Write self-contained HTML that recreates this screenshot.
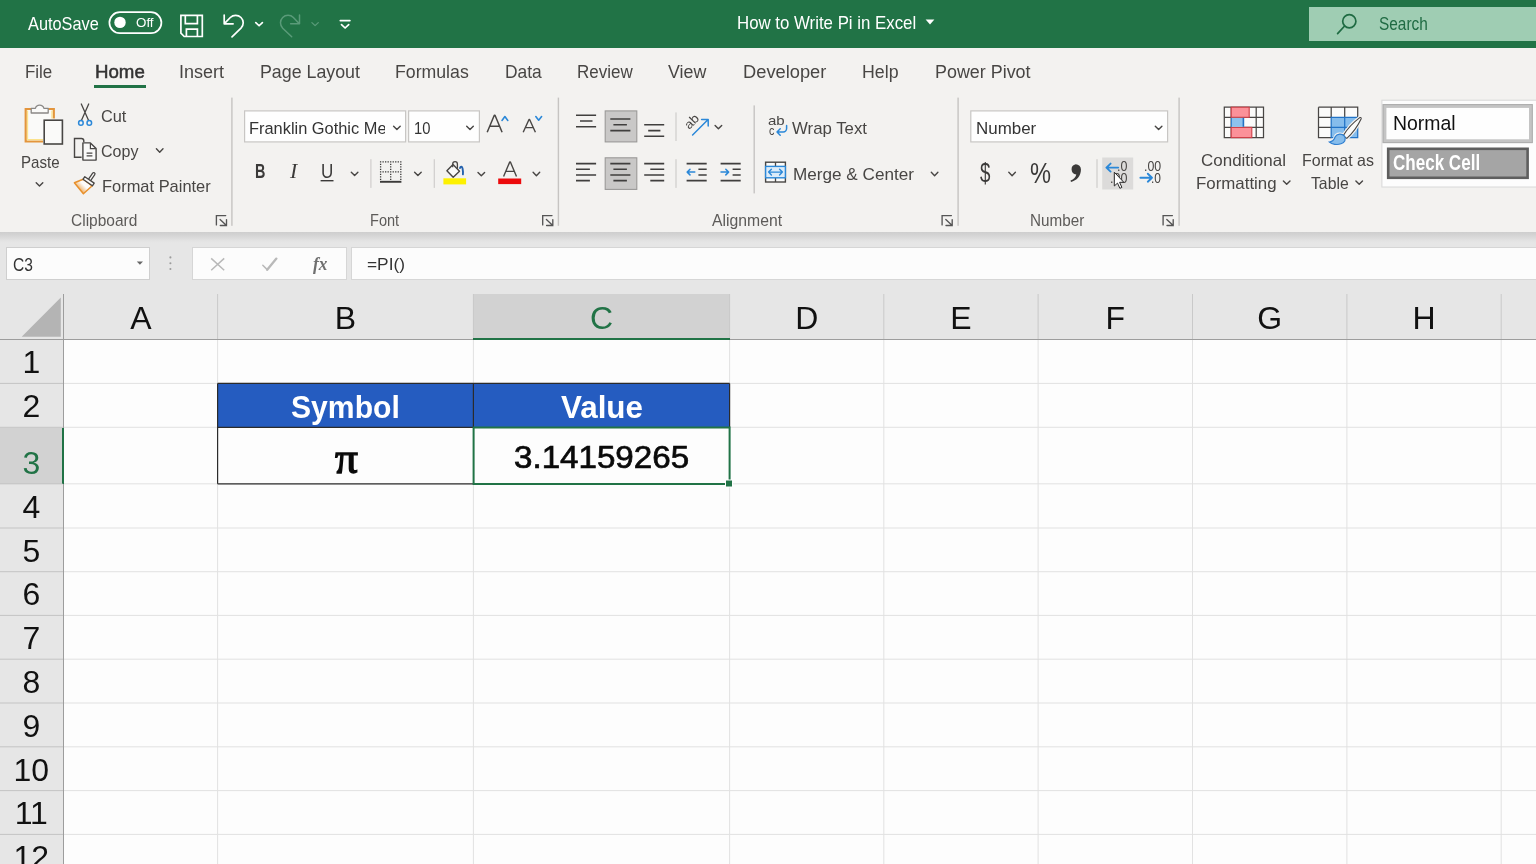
<!DOCTYPE html>
<html lang="en"><head><meta charset="utf-8"><title>How to Write Pi in Excel</title>
<style>
html,body{margin:0;padding:0}
body{width:1536px;height:864px;overflow:hidden;position:relative;background:#e6e6e6;font-family:"Liberation Sans",sans-serif;}
.t{position:absolute;white-space:pre;line-height:1;}
.r{position:absolute;box-sizing:border-box;}
svg.ov{position:absolute;left:0;top:0;}
#txt{position:absolute;left:0;top:0;width:1536px;height:864px;will-change:transform;}
</style></head><body>
<div class="r" style="left:0px;top:0px;width:1536px;height:48px;background:#217346;"></div>
<div class="r" style="left:0px;top:48px;width:1536px;height:184px;background:#f3f2f0;"></div>
<div class="r" style="left:0px;top:232px;width:1536px;height:11px;background:linear-gradient(#cecece 0%,#d2d2d2 20%,#dadada 50%,#e3e3e3 80%,#e6e6e6 100%);"></div>
<div class="r" style="left:1309px;top:7px;width:227px;height:34px;background:#9fcdb3;"></div>
<div class="r" style="left:6px;top:247px;width:144px;height:33px;background:#fcfcfc;border:1px solid #cfcfcf;"></div>
<div class="r" style="left:192px;top:247px;width:155px;height:33px;background:#fcfcfc;border:1px solid #d6d6d6;"></div>
<div class="r" style="left:351px;top:247px;width:1189px;height:33px;background:#fcfcfc;border:1px solid #d6d6d6;"></div>
<div class="r" style="left:64px;top:340px;width:1472px;height:524px;background:#fdfdfd;"></div>
<div class="r" style="left:473px;top:294px;width:257px;height:45px;background:#d2d2d2;"></div>
<div class="r" style="left:473px;top:338px;width:257px;height:2px;background:#217346;"></div>
<div class="r" style="left:0px;top:428px;width:63px;height:56px;background:#d2d2d2;"></div>
<div class="r" style="left:62px;top:428px;width:2px;height:56px;background:#217346;"></div>
<svg class="ov" width="1536" height="864" viewBox="0 0 1536 864">
<rect x="217.1" y="340" width="1" height="524" fill="#e2e2e2"/>
<rect x="217.1" y="294" width="1" height="45" fill="#c9c9c9"/>
<rect x="472.9" y="340" width="1" height="524" fill="#e2e2e2"/>
<rect x="472.9" y="294" width="1" height="45" fill="#c9c9c9"/>
<rect x="729.1" y="340" width="1" height="524" fill="#e2e2e2"/>
<rect x="729.1" y="294" width="1" height="45" fill="#c9c9c9"/>
<rect x="883.3" y="340" width="1" height="524" fill="#e2e2e2"/>
<rect x="883.3" y="294" width="1" height="45" fill="#c9c9c9"/>
<rect x="1037.6" y="340" width="1" height="524" fill="#e2e2e2"/>
<rect x="1037.6" y="294" width="1" height="45" fill="#c9c9c9"/>
<rect x="1192.0" y="340" width="1" height="524" fill="#e2e2e2"/>
<rect x="1192.0" y="294" width="1" height="45" fill="#c9c9c9"/>
<rect x="1346.4" y="340" width="1" height="524" fill="#e2e2e2"/>
<rect x="1346.4" y="294" width="1" height="45" fill="#c9c9c9"/>
<rect x="1500.7" y="340" width="1" height="524" fill="#e2e2e2"/>
<rect x="1500.7" y="294" width="1" height="45" fill="#c9c9c9"/>
<rect x="64" y="382.9" width="1472" height="1" fill="#e2e2e2"/>
<rect x="0" y="382.9" width="63" height="1" fill="#c4c4c4"/>
<rect x="64" y="426.8" width="1472" height="1" fill="#e2e2e2"/>
<rect x="0" y="426.8" width="63" height="1" fill="#c4c4c4"/>
<rect x="64" y="483.3" width="1472" height="1" fill="#e2e2e2"/>
<rect x="0" y="483.3" width="63" height="1" fill="#c4c4c4"/>
<rect x="64" y="527.5" width="1472" height="1" fill="#e2e2e2"/>
<rect x="0" y="527.5" width="63" height="1" fill="#c4c4c4"/>
<rect x="64" y="571.2" width="1472" height="1" fill="#e2e2e2"/>
<rect x="0" y="571.2" width="63" height="1" fill="#c4c4c4"/>
<rect x="64" y="614.9" width="1472" height="1" fill="#e2e2e2"/>
<rect x="0" y="614.9" width="63" height="1" fill="#c4c4c4"/>
<rect x="64" y="658.7" width="1472" height="1" fill="#e2e2e2"/>
<rect x="0" y="658.7" width="63" height="1" fill="#c4c4c4"/>
<rect x="64" y="702.5" width="1472" height="1" fill="#e2e2e2"/>
<rect x="0" y="702.5" width="63" height="1" fill="#c4c4c4"/>
<rect x="64" y="746.3" width="1472" height="1" fill="#e2e2e2"/>
<rect x="0" y="746.3" width="63" height="1" fill="#c4c4c4"/>
<rect x="64" y="790.1" width="1472" height="1" fill="#e2e2e2"/>
<rect x="0" y="790.1" width="63" height="1" fill="#c4c4c4"/>
<rect x="64" y="833.9" width="1472" height="1" fill="#e2e2e2"/>
<rect x="0" y="833.9" width="63" height="1" fill="#c4c4c4"/>
<rect x="0" y="339" width="1536" height="1" fill="#9d9d9d"/>
<rect x="63" y="294" width="1" height="570" fill="#9d9d9d"/>
<rect x="473" y="338" width="257" height="2" fill="#217346"/>
<rect x="62.5" y="428" width="1.5" height="56" fill="#217346"/>
<path d="M60.8,297.5 V336.7 H21.7 Z" fill="#b4b4b4"/>
<rect x="217.6" y="383.4" width="512" height="43.9" fill="#255cc0"/>
<rect x="217.6" y="427.3" width="256" height="56.5" fill="#fdfdfd"/>
<path d="M217.6,383.4 H729.6 M217.6,427.3 H473.4 M217.6,483.8 H473.4 M217.6,383.4 V483.8 M473.4,383.4 V427.3 M729.6,383.4 V427.3" stroke="#2b2b2b" stroke-width="1.2" fill="none"/>
<rect x="473.6" y="427.5" width="256" height="56.5" fill="#fdfdfd" stroke="#217346" stroke-width="2"/>
<rect x="725.5" y="480" width="7" height="7" fill="#217346" stroke="#fdfdfd" stroke-width="1"/>
<rect x="109.4" y="12.2" width="52" height="21" rx="10.5" fill="none" stroke="#fff" stroke-width="1.7"/>
<circle cx="120" cy="22.4" r="5.7" fill="#fff"/>
<path d="M180.9,15.3 H202.3 V36.5 H184.2 L180.9,33.2 Z M185.3,15.3 V23.6 H197.4 V15.3 M186.4,36.5 V29.2 H197.4 V36.5" fill="none" stroke="#fff" stroke-width="1.7" stroke-linejoin="miter"/>
<path d="M224.2,15 V23.8 H233.1 M224.6,23.4 L230.3,17.5 A7.5,7.5 0 1 1 241,28.2 L232,36.8" fill="none" stroke="#fff" stroke-width="1.7" stroke-linecap="round" stroke-linejoin="round"/>
<path d="M255.80,22.65 L259.10,25.75 L262.40,22.65" fill="none" stroke="#fff" stroke-width="1.7" stroke-linecap="round" stroke-linejoin="round"/>
<path d="M299.5,15 V23.8 H290.6 M299.1,23.4 L293.4,17.5 A7.5,7.5 0 1 0 282.7,28.2 L291.7,36.8" fill="none" stroke="#5a9b79" stroke-width="1.5" stroke-linecap="round" stroke-linejoin="round"/>
<path d="M311.90,22.60 L315.10,25.60 L318.30,22.60" fill="none" stroke="#5a9b79" stroke-width="1.3" stroke-linecap="round" stroke-linejoin="round"/>
<path d="M340.3,20.6 H349.9" stroke="#fff" stroke-width="1.7" fill="none" stroke-linecap="round"/>
<path d="M341.50,24.60 L345.10,28.00 L348.70,24.60" fill="none" stroke="#fff" stroke-width="1.7" stroke-linecap="round" stroke-linejoin="round"/>
<path d="M925.6,19.6 H934.4 L930,24.4 Z" fill="#fff"/>
<circle cx="1349.3" cy="21.2" r="6.6" fill="none" stroke="#1f6b43" stroke-width="1.7"/><path d="M1344.6,26 L1337.6,33.6" stroke="#1f6b43" stroke-width="1.7" stroke-linecap="round"/>
<rect x="231.20" y="97.6" width="1.4" height="128.2" fill="#c6c4c2"/>
<rect x="557.70" y="97.6" width="1.4" height="128.2" fill="#c6c4c2"/>
<rect x="957.40" y="97.6" width="1.4" height="128.2" fill="#c6c4c2"/>
<rect x="1178.40" y="97.6" width="1.4" height="128.2" fill="#c6c4c2"/>
<rect x="753.50" y="105.4" width="1.4" height="88.0" fill="#c6c4c2"/>
<rect x="370.30" y="159.2" width="1.2" height="28.7" fill="#d0cecc"/>
<rect x="433.70" y="159.2" width="1.2" height="28.7" fill="#d0cecc"/>
<rect x="675.40" y="159.2" width="1.2" height="28.7" fill="#d0cecc"/>
<rect x="1096.40" y="159.2" width="1.2" height="28.7" fill="#d0cecc"/>
<rect x="675.40" y="112.4" width="1.2" height="28.6" fill="#d0cecc"/>
<path d="M225.7,215.6 H216.4 V224.9 M220.1,219.5 L226.5,225.5 M226.5,219.6 V225.5 H220.3" fill="none" stroke="#555" stroke-width="1.35" stroke-linecap="round"/>
<path d="M552.0,215.6 H542.7 V224.9 M546.4,219.5 L552.8,225.5 M552.8,219.6 V225.5 H546.6" fill="none" stroke="#555" stroke-width="1.35" stroke-linecap="round"/>
<path d="M951.4,215.6 H942.1 V224.9 M945.8,219.5 L952.2,225.5 M952.2,219.6 V225.5 H946.0" fill="none" stroke="#555" stroke-width="1.35" stroke-linecap="round"/>
<path d="M1172.4,215.6 H1163.1 V224.9 M1166.8,219.5 L1173.2,225.5 M1173.2,219.6 V225.5 H1167.0" fill="none" stroke="#555" stroke-width="1.35" stroke-linecap="round"/>
<rect x="25" y="108.4" width="29.4" height="33.6" fill="#fafaf9"/>
<path d="M31.4,109 H25.7 V141.5 H43" fill="none" stroke="#e3953c" stroke-width="2.2"/>
<path d="M48,109 H53.8 V118.6" fill="none" stroke="#e3953c" stroke-width="2.2"/>
<path d="M27.5,110.4 V139.7 H43 M52,110.4 V118.6" fill="none" stroke="#fbe28c" stroke-width="1.3"/>
<path d="M31.2,113 V108.4 H35.4 A4.4,4.4 0 0 1 43.9,108.4 H48.2 V113 Z" fill="#fafaf9" stroke="#8a8886" stroke-width="1.3" stroke-linejoin="round"/>
<rect x="44.2" y="120.2" width="18.2" height="23.8" fill="#fafaf9" stroke="#484644" stroke-width="1.6"/>
<path d="M36.20,182.70 L39.50,186.10 L42.80,182.70" fill="none" stroke="#484644" stroke-width="1.4" stroke-linecap="round" stroke-linejoin="round"/>
<path d="M81.3,104 L88.6,120.4 M88.7,104 L81.4,120.4" stroke="#484644" stroke-width="1.3" fill="none" stroke-linecap="round"/>
<circle cx="80.9" cy="122.9" r="2.3" fill="none" stroke="#2b88d8" stroke-width="1.5"/><circle cx="89.3" cy="122.9" r="2.3" fill="none" stroke="#2b88d8" stroke-width="1.5"/>
<path d="M83.8,142 V140.8 Q83.8,138.5 81.4,138.5 H74.5 V157.2 H81.6" fill="none" stroke="#484644" stroke-width="1.4"/>
<path d="M82.9,142.9 H90.4 L96.1,148.6 V160.1 H82.9 Z" fill="#fafaf9" stroke="#484644" stroke-width="1.4" stroke-linejoin="round"/>
<path d="M90.4,143.2 V148.6 H95.8 M86.6,153.1 H92.4 M86.6,155.8 H92.4" fill="none" stroke="#484644" stroke-width="1.2"/>
<path d="M156.40,148.80 L159.70,152.20 L163.00,148.80" fill="none" stroke="#484644" stroke-width="1.4" stroke-linecap="round" stroke-linejoin="round"/>
<defs><linearGradient id="fpg" gradientUnits="userSpaceOnUse" x1="88" y1="182" x2="80" y2="190"><stop offset="0.45" stop-color="#fdfcfa"/><stop offset="1" stop-color="#f0b36a"/></linearGradient></defs>
<path d="M83.2,179.2 L74.4,182.8 L83.4,193.8 L92.2,185.8 Z" fill="url(#fpg)" stroke="#e8912d" stroke-width="1.5" stroke-linejoin="round"/>
<path d="M89.6,179.8 L93.7,173.9" stroke="#484644" stroke-width="3.8" stroke-linecap="round"/><path d="M89.6,179.8 L93.7,173.9" stroke="#fafaf9" stroke-width="1.3" stroke-linecap="round"/>
<path d="M84.8,176.7 L94.2,183.1 L92.4,185.8 L83,179.3 Z" fill="#fafaf9" stroke="#484644" stroke-width="1.3" stroke-linejoin="round"/>
<rect x="244.6" y="110.9" width="161" height="31" fill="#fefefe" stroke="#c8c6c4" stroke-width="1.2"/>
<rect x="408.6" y="110.9" width="70.8" height="31" fill="#fefefe" stroke="#c8c6c4" stroke-width="1.2"/>
<path d="M393.60,126.20 L396.90,129.60 L400.20,126.20" fill="none" stroke="#484644" stroke-width="1.4" stroke-linecap="round" stroke-linejoin="round"/>
<path d="M466.70,126.20 L470.00,129.60 L473.30,126.20" fill="none" stroke="#484644" stroke-width="1.4" stroke-linecap="round" stroke-linejoin="round"/>
<path d="M487.2,132.2 L494.3,115.2 H495 L502.1,132.2 M489.9,126.2 H499.4" fill="none" stroke="#484644" stroke-width="1.5" stroke-linejoin="round"/>
<path d="M502,120.4 L504.9,116.6 L507.8,120.4" fill="none" stroke="#2b88d8" stroke-width="1.6" stroke-linecap="round" stroke-linejoin="round"/>
<path d="M523.2,132.2 L529,119.5 H529.6 L535.4,132.2 M525.4,127.6 H533.2" fill="none" stroke="#484644" stroke-width="1.4" stroke-linejoin="round"/>
<path d="M535.8,116.6 L538.7,120.2 L541.6,116.6" fill="none" stroke="#2b88d8" stroke-width="1.6" stroke-linecap="round" stroke-linejoin="round"/>
<path d="M351.30,172.20 L354.60,175.60 L357.90,172.20" fill="none" stroke="#484644" stroke-width="1.4" stroke-linecap="round" stroke-linejoin="round"/>
<path d="M379.95,161.15h1.3v1.3h-1.3zM379.95,171.15h1.3v1.3h-1.3zM382.48,161.15h1.3v1.3h-1.3zM382.48,171.15h1.3v1.3h-1.3zM385.00,161.15h1.3v1.3h-1.3zM385.00,171.15h1.3v1.3h-1.3zM387.53,161.15h1.3v1.3h-1.3zM387.53,171.15h1.3v1.3h-1.3zM390.05,161.15h1.3v1.3h-1.3zM390.05,171.15h1.3v1.3h-1.3zM392.58,161.15h1.3v1.3h-1.3zM392.58,171.15h1.3v1.3h-1.3zM395.10,161.15h1.3v1.3h-1.3zM395.10,171.15h1.3v1.3h-1.3zM397.63,161.15h1.3v1.3h-1.3zM397.63,171.15h1.3v1.3h-1.3zM400.15,161.15h1.3v1.3h-1.3zM400.15,171.15h1.3v1.3h-1.3zM379.95,163.65h1.3v1.3h-1.3zM390.05,163.65h1.3v1.3h-1.3zM400.15,163.65h1.3v1.3h-1.3zM379.95,166.15h1.3v1.3h-1.3zM390.05,166.15h1.3v1.3h-1.3zM400.15,166.15h1.3v1.3h-1.3zM379.95,168.65h1.3v1.3h-1.3zM390.05,168.65h1.3v1.3h-1.3zM400.15,168.65h1.3v1.3h-1.3zM379.95,173.65h1.3v1.3h-1.3zM390.05,173.65h1.3v1.3h-1.3zM400.15,173.65h1.3v1.3h-1.3zM379.95,176.15h1.3v1.3h-1.3zM390.05,176.15h1.3v1.3h-1.3zM400.15,176.15h1.3v1.3h-1.3zM379.95,178.65h1.3v1.3h-1.3zM390.05,178.65h1.3v1.3h-1.3zM400.15,178.65h1.3v1.3h-1.3z" fill="#3b3a39"/>
<path d="M380,181.8 H401.4" stroke="#3b3a39" stroke-width="1.9"/>
<path d="M414.60,172.20 L417.90,175.60 L421.20,172.20" fill="none" stroke="#484644" stroke-width="1.4" stroke-linecap="round" stroke-linejoin="round"/>
<path d="M453,164.4 L459.5,171.2 L453.2,177.3 L446.9,170.8 Z" fill="#fafaf9" stroke="#484644" stroke-width="1.4" stroke-linejoin="round"/>
<path d="M452.7,167.2 V164 C452.7,160.8 457.4,160.8 457.4,164 V168.8" fill="none" stroke="#484644" stroke-width="1.3"/>
<path d="M460,168 C460.6,166.2 462.2,166.4 462.6,168.6 C463,170.8 463.1,172.6 462.9,174.4" fill="none" stroke="#2462ad" stroke-width="1.9" stroke-linecap="round"/>
<rect x="443.4" y="178.3" width="22.7" height="6.1" fill="#fdf100"/>
<path d="M478.00,172.40 L481.30,175.80 L484.60,172.40" fill="none" stroke="#484644" stroke-width="1.4" stroke-linecap="round" stroke-linejoin="round"/>
<path d="M503.6,176.6 L509.7,162 H510.4 L516.5,176.6 M505.9,171.4 H514.2" fill="none" stroke="#484644" stroke-width="1.4" stroke-linejoin="round"/>
<rect x="498.2" y="178.5" width="23" height="5.6" fill="#ec0a0c"/>
<path d="M533.10,172.30 L536.40,175.70 L539.70,172.30" fill="none" stroke="#484644" stroke-width="1.4" stroke-linecap="round" stroke-linejoin="round"/>
<rect x="605.2" y="110.9" width="31.6" height="31" fill="#c9c8c7" stroke="#9a9998" stroke-width="1.1"/>
<rect x="605.2" y="157.8" width="31.6" height="31.6" fill="#c9c8c7" stroke="#9a9998" stroke-width="1.1"/>
<path d="M576.0,115.3 H596.1 M580.0,121.0 H592.5 M576.0,126.8 H596.1 " fill="none" stroke="#403f3e" stroke-width="1.55"/>
<path d="M610.3,119.0 H630.4 M613.4,124.8 H626.9 M610.3,130.6 H630.4 " fill="none" stroke="#403f3e" stroke-width="1.55"/>
<path d="M644.2,124.8 H664.2 M648.2,130.6 H660.4 M644.2,136.3 H664.2 " fill="none" stroke="#403f3e" stroke-width="1.55"/>
<path d="M576.0,163.6 H596.1 M576.0,169.3 H589.9 M576.0,174.9 H596.1 M576.0,180.6 H589.9 " fill="none" stroke="#403f3e" stroke-width="1.55"/>
<path d="M610.3,163.6 H630.4 M613.4,169.3 H626.9 M610.3,174.9 H630.4 M613.4,180.6 H626.9 " fill="none" stroke="#403f3e" stroke-width="1.55"/>
<path d="M644.2,163.6 H664.2 M650.3,169.3 H664.2 M644.2,174.9 H664.2 M650.3,180.6 H664.2 " fill="none" stroke="#403f3e" stroke-width="1.55"/>
<path d="M692.6,135 L707.6,120 M701.6,119.4 H708.2 V126" fill="none" stroke="#2b88d8" stroke-width="1.5" stroke-linecap="round" stroke-linejoin="round"/>
<path d="M715.10,125.40 L718.40,128.80 L721.70,125.40" fill="none" stroke="#484644" stroke-width="1.4" stroke-linecap="round" stroke-linejoin="round"/>
<path d="M686.6,163.6 H706.7 M698.4,169.3 H706.7 M698.4,174.9 H706.7 M686.6,180.6 H706.7 " fill="none" stroke="#403f3e" stroke-width="1.55"/>
<path d="M687.2,172.1 H694.8 M690,169.3 L687.2,172.1 L690,174.9" fill="none" stroke="#2b88d8" stroke-width="1.5" stroke-linecap="round" stroke-linejoin="round"/>
<path d="M720.6,163.6 H740.7 M732.6,169.3 H740.7 M732.6,174.9 H740.7 M720.6,180.6 H740.7 " fill="none" stroke="#403f3e" stroke-width="1.55"/>
<path d="M721,172.1 H728.6 M725.8,169.3 L728.6,172.1 L725.8,174.9" fill="none" stroke="#2b88d8" stroke-width="1.5" stroke-linecap="round" stroke-linejoin="round"/>
<path d="M786.6,125.6 V128.6 A3.4,3.4 0 0 1 783.2,132 H777 M780.2,128.8 L777,132 L780.2,135.2" fill="none" stroke="#2b88d8" stroke-width="1.5" stroke-linecap="round" stroke-linejoin="round"/>
<rect x="765.6" y="162.2" width="19.8" height="19.8" fill="#fbfbfa" stroke="#484644" stroke-width="1.4"/>
<path d="M775.5,162.2 V166.4 M775.5,177.8 V182" stroke="#484644" stroke-width="1.3"/>
<rect x="765.6" y="166.4" width="19.8" height="11.4" fill="#dcecf9" stroke="#2b88d8" stroke-width="1.4"/>
<path d="M768.6,172.1 H782.4 M771.4,169.3 L768.6,172.1 L771.4,174.9 M779.6,169.3 L782.4,172.1 L779.6,174.9" fill="none" stroke="#2b88d8" stroke-width="1.4" stroke-linecap="round" stroke-linejoin="round"/>
<path d="M931.30,172.30 L934.60,175.70 L937.90,172.30" fill="none" stroke="#484644" stroke-width="1.4" stroke-linecap="round" stroke-linejoin="round"/>
<rect x="970.8" y="110.9" width="196.8" height="31" fill="#fefefe" stroke="#c8c6c4" stroke-width="1.2"/>
<path d="M1155.30,126.20 L1158.60,129.60 L1161.90,126.20" fill="none" stroke="#484644" stroke-width="1.4" stroke-linecap="round" stroke-linejoin="round"/>
<path d="M1008.80,172.30 L1012.10,175.70 L1015.40,172.30" fill="none" stroke="#484644" stroke-width="1.4" stroke-linecap="round" stroke-linejoin="round"/>
<rect x="1102.2" y="157.5" width="31" height="32" fill="#dcdbda"/>
<path d="M1106.4,167.6 H1118.2 M1110.6,163.6 L1106.4,167.6 L1110.6,171.6" fill="none" stroke="#2b88d8" stroke-width="1.9" stroke-linecap="round" stroke-linejoin="round"/>
<path d="M1140.4,177.7 H1152 M1147.8,173.7 L1152,177.7 L1147.8,181.7" fill="none" stroke="#2b88d8" stroke-width="1.9" stroke-linecap="round" stroke-linejoin="round"/>
<rect x="1224.3" y="107.2" width="39.2" height="30.4" fill="#fbfbfa"/>
<path d="M1224.3,107.2 H1263.5 V137.6 H1224.3 Z M1231.2,107.2 V137.6 M1256.2,107.2 V137.6 M1224.3,117.3 H1263.5 M1224.3,127.4 H1263.5" fill="none" stroke="#484644" stroke-width="1.25"/>
<rect x="1231.2" y="107.2" width="18" height="10.1" fill="#fb9199" stroke="#cf3f47" stroke-width="1.1"/>
<rect x="1231.2" y="127.4" width="20.6" height="10.2" fill="#fb9199" stroke="#cf3f47" stroke-width="1.1"/>
<rect x="1231.2" y="117.9" width="12.2" height="8.9" fill="#8ec2ed"/><path d="M1243.4,117.9 V126.8" stroke="#2372c4" stroke-width="1.6"/><path d="M1231.4,117.9 V126.8" stroke="#2f7fd0" stroke-width="1"/>
<path d="M1283.40,180.90 L1286.70,184.30 L1290.00,180.90" fill="none" stroke="#484644" stroke-width="1.4" stroke-linecap="round" stroke-linejoin="round"/>
<rect x="1318.5" y="107.2" width="39.2" height="30.4" fill="#fbfbfa"/>
<rect x="1331.2" y="117.3" width="26.5" height="20.3" fill="#86bdec"/>
<path d="M1318.5,107.2 H1357.7 V117 M1318.5,107.2 V137.6 H1331.2 M1331.2,107.2 V117.3 M1344.7,107.2 V117.3 M1318.5,117.3 H1331.2 M1318.5,127.4 H1331.2" fill="none" stroke="#484644" stroke-width="1.25"/>
<path d="M1331.2,117.3 H1357.7 V137.6 H1331.2 Z M1331.2,127.4 H1357.7 M1344.7,117.3 V137.6" fill="none" stroke="#2273c6" stroke-width="1.25"/>
<path d="M1343.2,135.8 Q1349,125.6 1359.8,117.6 Q1361.4,117 1361.2,118.8 Q1355.6,130.6 1346.8,138.4 Z" fill="#fbfbfa" stroke="#f3f2f1" stroke-width="3.4" stroke-linejoin="round"/>
<path d="M1329.4,142 C1333.4,141.6 1334.4,139.4 1335.2,136.8 C1336.8,133.4 1342,133.2 1344.4,136 C1346.6,139.2 1344.6,142.6 1341,143.8 C1337,145.2 1332,144.4 1329.4,142 Z" fill="#86bdec" stroke="#f3f2f1" stroke-width="3"/>
<path d="M1343.2,135.8 Q1349,125.6 1359.8,117.6 Q1361.4,117 1361.2,118.8 Q1355.6,130.6 1346.8,138.4 Z" fill="#fbfbfa" stroke="#484644" stroke-width="1.1" stroke-linejoin="round"/>
<path d="M1329.4,142 C1333.4,141.6 1334.4,139.4 1335.2,136.8 C1336.8,133.4 1342,133.2 1344.4,136 C1346.6,139.2 1344.6,142.6 1341,143.8 C1337,145.2 1332,144.4 1329.4,142 Z" fill="#86bdec" stroke="#2f7fd0" stroke-width="1.2"/>
<path d="M1355.90,180.90 L1359.20,184.30 L1362.50,180.90" fill="none" stroke="#484644" stroke-width="1.4" stroke-linecap="round" stroke-linejoin="round"/>
<rect x="1381.9" y="100.2" width="160" height="86.8" fill="#fdfdfd" stroke="#d8d8d8" stroke-width="1"/>
<rect x="1384.5" y="106" width="146.4" height="35.2" fill="#fefefe" stroke="#c4c4c4" stroke-width="3.8"/>
<rect x="1383.1" y="104.6" width="149.2" height="38" fill="none" stroke="#adadad" stroke-width="1"/>
<rect x="1388.2" y="148.8" width="139.4" height="29" fill="#a5a5a5" stroke="#5e5e5e" stroke-width="2.6"/>
<path d="M136.8,261.6 H143 L139.9,264.8 Z" fill="#666"/>
<circle cx="170.4" cy="257.4" r="1.05" fill="#9c9c9c"/><circle cx="170.4" cy="263.2" r="1.05" fill="#9c9c9c"/><circle cx="170.4" cy="269" r="1.05" fill="#9c9c9c"/>
<path d="M211.2,258.4 L224.2,270.2 M224.2,258.4 L211.2,270.2" stroke="#b9b9b9" stroke-width="1.5" fill="none"/>
<path d="M262.8,265.2 L267.2,269.6" stroke="#b9b9b9" stroke-width="1.5" fill="none" stroke-linecap="round"/><path d="M267.2,269.8 L276.4,258.6" stroke="#b9b9b9" stroke-width="2.3" fill="none" stroke-linecap="round"/>
<rect x="320.6" y="180" width="12.9" height="1.4" fill="#3b3a39"/>
<path d="M1075.8,164.3 A5.15,5.15 0 0 1 1080.95,169.5 C1080.95,176 1076.6,180.6 1071,182 L1070.5,180.6 C1073.8,179.2 1075.9,177 1076.3,174.5 A5.15,5.15 0 0 1 1075.8,164.3 Z" fill="#3b3a39"/>
</svg>
<div id="txt">
<span class="t" style="left:130.14px;top:302.00px;font-size:31.98px;letter-spacing:0.000px;color:#111;">A</span>
<span class="t" style="left:334.84px;top:302.00px;font-size:31.98px;letter-spacing:0.000px;color:#111;">B</span>
<span class="t" style="left:589.96px;top:302.00px;font-size:31.98px;letter-spacing:0.000px;color:#217346;">C</span>
<span class="t" style="left:795.16px;top:302.00px;font-size:31.98px;letter-spacing:0.000px;color:#111;">D</span>
<span class="t" style="left:950.34px;top:302.00px;font-size:31.98px;letter-spacing:0.000px;color:#111;">E</span>
<span class="t" style="left:1105.53px;top:302.00px;font-size:31.98px;letter-spacing:0.000px;color:#111;">F</span>
<span class="t" style="left:1257.26px;top:302.00px;font-size:31.98px;letter-spacing:0.000px;color:#111;">G</span>
<span class="t" style="left:1412.46px;top:302.00px;font-size:31.98px;letter-spacing:0.000px;color:#111;">H</span>
<span class="t" style="left:22.41px;top:346.00px;font-size:31.98px;letter-spacing:0.000px;color:#111;">1</span>
<span class="t" style="left:22.41px;top:390.00px;font-size:31.98px;letter-spacing:0.000px;color:#111;">2</span>
<span class="t" style="left:22.41px;top:447.00px;font-size:31.98px;letter-spacing:0.000px;color:#217346;">3</span>
<span class="t" style="left:22.41px;top:491.00px;font-size:31.98px;letter-spacing:0.000px;color:#111;">4</span>
<span class="t" style="left:22.41px;top:535.00px;font-size:31.98px;letter-spacing:0.000px;color:#111;">5</span>
<span class="t" style="left:22.41px;top:578.00px;font-size:31.98px;letter-spacing:0.000px;color:#111;">6</span>
<span class="t" style="left:22.41px;top:622.00px;font-size:31.98px;letter-spacing:0.000px;color:#111;">7</span>
<span class="t" style="left:22.41px;top:666.00px;font-size:31.98px;letter-spacing:0.000px;color:#111;">8</span>
<span class="t" style="left:22.41px;top:710.00px;font-size:31.98px;letter-spacing:0.000px;color:#111;">9</span>
<span class="t" style="left:13.52px;top:754.00px;font-size:31.98px;letter-spacing:0.000px;color:#111;">10</span>
<span class="t" style="left:14.70px;top:797.00px;font-size:31.98px;letter-spacing:0.000px;color:#111;">11</span>
<span class="t" style="left:13.52px;top:841.00px;font-size:31.98px;letter-spacing:0.000px;color:#111;">12</span>
<span class="t" style="left:291.40px;top:392.00px;font-size:31.25px;letter-spacing:0.000px;color:#fff;font-weight:bold;transform-origin:0.00px 50%;transform:scaleX(0.964);">Symbol</span>
<span class="t" style="left:560.60px;top:392.00px;font-size:31.25px;letter-spacing:0.000px;color:#fff;font-weight:bold;transform-origin:0.00px 50%;transform:scaleX(1.004);">Value</span>
<span class="t" style="left:514.30px;top:442.00px;font-size:30.52px;letter-spacing:0.000px;color:#0a0a0a;-webkit-text-stroke:0.7px #0a0a0a;transform-origin:0.00px 50%;transform:scaleX(1.086);">3.14159265</span>
<span class="t" style="left:335.40px;top:437.00px;font-size:43.70px;letter-spacing:0.000px;color:#0a0a0a;font-family:'Liberation Serif',serif;-webkit-text-stroke:1.3px #0a0a0a;transform-origin:0.00px 50%;transform:scaleX(1.038);">π</span>
<span class="t" style="left:13.00px;top:257.00px;font-size:17.44px;letter-spacing:0.000px;color:#333;transform-origin:0.00px 50%;transform:scaleX(0.893);">C3</span>
<span class="t" style="left:367.40px;top:256.00px;font-size:17.15px;letter-spacing:0.000px;color:#333;transform-origin:0.00px 50%;transform:scaleX(1.009);">=PI()</span>
<span class="t" style="left:28.40px;top:15.00px;font-size:18.02px;letter-spacing:0.000px;color:#fff;transform-origin:0.00px 50%;transform:scaleX(0.906);">AutoSave</span>
<span class="t" style="left:136.00px;top:16.00px;font-size:13.23px;letter-spacing:0.000px;color:#fff;transform-origin:0.00px 50%;transform:scaleX(1.010);">Off</span>
<span class="t" style="left:737.10px;top:15.00px;font-size:17.59px;letter-spacing:0.000px;color:#fff;transform-origin:0.00px 50%;transform:scaleX(0.957);">How to Write Pi in Excel</span>
<span class="t" style="left:1379.20px;top:16.00px;font-size:17.44px;letter-spacing:0.000px;color:#1f6b43;transform-origin:0.00px 50%;transform:scaleX(0.883);">Search</span>
<span class="t" style="left:24.70px;top:63.00px;font-size:18.02px;letter-spacing:0.000px;color:#484644;transform-origin:0.00px 50%;transform:scaleX(0.940);">File</span>
<span class="t" style="left:179.00px;top:63.00px;font-size:18.02px;letter-spacing:0.000px;color:#484644;transform-origin:0.00px 50%;transform:scaleX(0.998);">Insert</span>
<span class="t" style="left:260.00px;top:63.00px;font-size:18.02px;letter-spacing:0.000px;color:#484644;transform-origin:0.00px 50%;transform:scaleX(0.988);">Page Layout</span>
<span class="t" style="left:395.20px;top:63.00px;font-size:18.02px;letter-spacing:0.000px;color:#484644;transform-origin:0.00px 50%;transform:scaleX(0.982);">Formulas</span>
<span class="t" style="left:504.90px;top:63.00px;font-size:18.02px;letter-spacing:0.000px;color:#484644;transform-origin:0.00px 50%;transform:scaleX(0.966);">Data</span>
<span class="t" style="left:577.30px;top:63.00px;font-size:18.02px;letter-spacing:0.000px;color:#484644;transform-origin:0.00px 50%;transform:scaleX(0.943);">Review</span>
<span class="t" style="left:667.80px;top:63.00px;font-size:18.02px;letter-spacing:0.000px;color:#484644;transform-origin:0.00px 50%;transform:scaleX(0.990);">View</span>
<span class="t" style="left:742.60px;top:63.00px;font-size:18.02px;letter-spacing:0.000px;color:#484644;transform-origin:0.00px 50%;transform:scaleX(1.015);">Developer</span>
<span class="t" style="left:861.70px;top:63.00px;font-size:18.02px;letter-spacing:0.000px;color:#484644;transform-origin:0.00px 50%;transform:scaleX(0.985);">Help</span>
<span class="t" style="left:935.40px;top:63.00px;font-size:18.02px;letter-spacing:0.000px;color:#484644;transform-origin:0.00px 50%;transform:scaleX(0.994);">Power Pivot</span>
<span class="t" style="left:95.00px;top:63.00px;font-size:18.02px;letter-spacing:0.000px;color:#333;-webkit-text-stroke:0.5px #333;transform-origin:0.00px 50%;transform:scaleX(1.036);">Home</span>
<div class="r" style="left:94px;top:84.5px;width:52px;height:3.799999999999997px;background:#217346;"></div>
<span class="t" style="left:20.80px;top:154.00px;font-size:17.01px;letter-spacing:0.000px;color:#484644;transform-origin:0.00px 50%;transform:scaleX(0.888);">Paste</span>
<span class="t" style="left:101.00px;top:108.00px;font-size:17.01px;letter-spacing:0.000px;color:#484644;transform-origin:0.00px 50%;transform:scaleX(0.960);">Cut</span>
<span class="t" style="left:101.00px;top:143.00px;font-size:17.01px;letter-spacing:0.000px;color:#484644;transform-origin:0.00px 50%;transform:scaleX(0.942);">Copy</span>
<span class="t" style="left:101.60px;top:178.00px;font-size:17.01px;letter-spacing:0.000px;color:#484644;transform-origin:0.00px 50%;transform:scaleX(0.967);">Format Painter</span>
<span class="t" style="left:70.80px;top:212.00px;font-size:16.13px;letter-spacing:0.000px;color:#5d5b59;transform-origin:0.00px 50%;transform:scaleX(0.962);">Clipboard</span>
<span class="t" style="left:249.00px;top:121.00px;font-size:16.86px;letter-spacing:0.000px;color:#333;transform-origin:0.00px 50%;transform:scaleX(0.972);">Franklin Gothic Me</span>
<div class="r" style="left:385px;top:115px;width:6px;height:24px;background:#fefefe;"></div>
<span class="t" style="left:413.50px;top:121.00px;font-size:16.86px;letter-spacing:0.000px;color:#333;transform-origin:0.00px 50%;transform:scaleX(0.875);">10</span>
<span class="t" style="left:370.00px;top:212.00px;font-size:16.13px;letter-spacing:0.000px;color:#5d5b59;transform-origin:0.00px 50%;transform:scaleX(0.904);">Font</span>
<span class="t" style="left:712.40px;top:212.00px;font-size:16.13px;letter-spacing:0.000px;color:#5d5b59;transform-origin:0.00px 50%;transform:scaleX(0.978);">Alignment</span>
<span class="t" style="left:792.20px;top:120.00px;font-size:17.01px;letter-spacing:0.000px;color:#484644;transform-origin:0.00px 50%;transform:scaleX(0.988);">Wrap Text</span>
<span class="t" style="left:792.50px;top:166.00px;font-size:17.01px;letter-spacing:0.000px;color:#484644;transform-origin:0.00px 50%;transform:scaleX(1.008);">Merge &amp; Center</span>
<span class="t" style="left:975.50px;top:121.00px;font-size:16.86px;letter-spacing:0.000px;color:#333;transform-origin:0.00px 50%;transform:scaleX(1.004);">Number</span>
<span class="t" style="left:1030.00px;top:212.00px;font-size:16.13px;letter-spacing:0.000px;color:#5d5b59;transform-origin:0.00px 50%;transform:scaleX(0.946);">Number</span>
<span class="t" style="left:1201.20px;top:153.00px;font-size:16.72px;letter-spacing:0.000px;color:#484644;transform-origin:0.00px 50%;transform:scaleX(1.016);">Conditional</span>
<span class="t" style="left:1196.00px;top:176.00px;font-size:16.72px;letter-spacing:0.000px;color:#484644;transform-origin:0.00px 50%;transform:scaleX(1.010);">Formatting</span>
<span class="t" style="left:1302.40px;top:153.00px;font-size:16.72px;letter-spacing:0.000px;color:#484644;transform-origin:0.00px 50%;transform:scaleX(0.957);">Format as</span>
<span class="t" style="left:1311.00px;top:176.00px;font-size:16.72px;letter-spacing:0.000px;color:#484644;transform-origin:0.00px 50%;transform:scaleX(0.943);">Table</span>
<span class="t" style="left:1393.20px;top:112.00px;font-size:21.08px;letter-spacing:0.000px;color:#111;transform-origin:0.00px 50%;transform:scaleX(0.922);">Normal</span>
<span class="t" style="left:1393.20px;top:152.00px;font-size:21.22px;letter-spacing:0.000px;color:#fff;font-weight:bold;transform-origin:0.00px 50%;transform:scaleX(0.803);">Check Cell</span>
<span class="t" style="left:254.60px;top:161.00px;font-size:20.20px;letter-spacing:0.000px;color:#3b3a39;font-weight:bold;transform-origin:0.00px 50%;transform:scaleX(0.713);">B</span>
<span class="t" style="left:289.88px;top:161.00px;font-size:21.22px;letter-spacing:0.000px;color:#3b3a39;font-style:italic;font-family:'Liberation Serif',serif;transform-origin:-0.08px 50%;transform:scaleX(1.025);">I</span>
<span class="t" style="left:320.90px;top:162.00px;font-size:19.62px;letter-spacing:0.000px;color:#3b3a39;transform-origin:0.00px 50%;transform:scaleX(0.868);">U</span>
<span class="t" style="left:979.50px;top:159.00px;font-size:28.00px;letter-spacing:0.000px;color:#3b3a39;transform-origin:0.00px 50%;transform:scaleX(0.668);">$</span>
<span class="t" style="left:1030.30px;top:159.00px;font-size:29.00px;letter-spacing:0.000px;color:#3b3a39;transform-origin:0.00px 50%;transform:scaleX(0.815);">%</span>
<span class="t" style="left:312.50px;top:254.00px;font-size:19.00px;letter-spacing:0.000px;color:#6f6f6f;font-weight:bold;font-style:italic;font-family:'Liberation Serif',serif;transform-origin:0.00px 50%;transform:scaleX(0.910);">fx</span>
<span class="t" style="left:692.3px;top:122.1px;font-size:12.6px;color:#484644;transform:translate(-50%,-50%) rotate(-45deg) scaleX(1.1);">ab</span>
<span class="t" style="left:768.20px;top:114.00px;font-size:13.40px;letter-spacing:0.000px;color:#484644;transform-origin:0.00px 50%;transform:scaleX(1.121);">ab</span>
<span class="t" style="left:768.50px;top:124.00px;font-size:13.40px;letter-spacing:0.000px;color:#484644;transform-origin:0.00px 50%;transform:scaleX(0.806);">c</span>
<span class="t" style="left:1116.90px;top:160.00px;font-size:13.90px;letter-spacing:0.000px;color:#484644;transform-origin:0.00px 50%;transform:scaleX(0.897);">.0</span>
<span class="t" style="left:1109.90px;top:172.00px;font-size:13.90px;letter-spacing:0.000px;color:#484644;transform-origin:0.00px 50%;transform:scaleX(0.901);">.00</span>
<span class="t" style="left:1144.00px;top:160.00px;font-size:13.90px;letter-spacing:0.000px;color:#484644;transform-origin:0.00px 50%;transform:scaleX(0.890);">.00</span>
<span class="t" style="left:1151.40px;top:172.00px;font-size:13.90px;letter-spacing:0.000px;color:#484644;transform-origin:0.00px 50%;transform:scaleX(0.863);">.0</span>
<svg style="position:absolute;left:1110px;top:168px" width="18" height="24" viewBox="1110 168 18 24"><path d="M1114.3,172.2 V186 L1117.5,183.1 L1119.9,188.3 L1121.9,187.4 L1119.6,182.3 H1123.8 Z" fill="#fff" stroke="#2a2a2a" stroke-width="1" stroke-linejoin="round"/></svg>
</div>
</body></html>
